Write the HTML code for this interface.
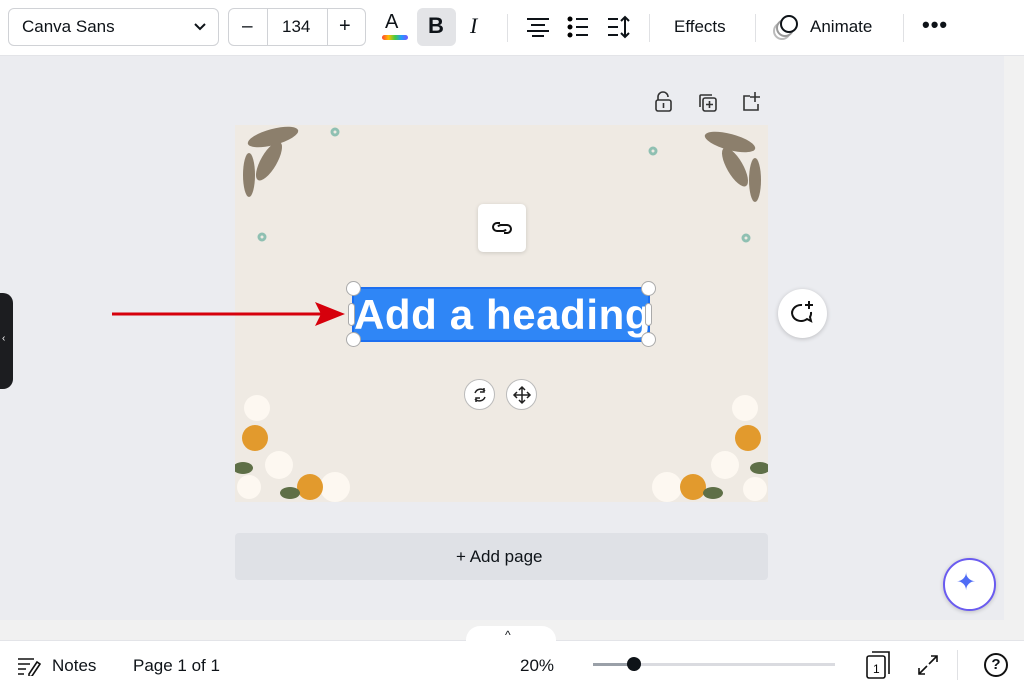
<!DOCTYPE html>
<html><head><style>
*{margin:0;padding:0;box-sizing:border-box}
body{width:1024px;height:682px;overflow:hidden;background:#ebecf0;font-family:"Liberation Sans",sans-serif;position:relative;color:#0e1318}
.a{position:absolute}
.tb{left:0;top:0;width:1024px;height:56px;background:#fff;border-bottom:1px solid #e3e4e8}
.btn{border:1px solid #d0d2d6;border-radius:6px;background:#fff}
.t{font-size:17px;color:#0e1318}
.sep{width:1px;height:28px;background:#e0e1e4;top:14px}
</style></head><body>
<div class="a tb"></div>
<div class="a btn" style="left:8px;top:8px;width:211px;height:38px"></div>
<div class="a t" style="left:22px;top:17px">Canva Sans</div>
<svg class="a" style="left:192px;top:20px" width="16" height="14"><path d="M3 4l5 5 5-5" stroke="#0e1318" stroke-width="2" fill="none"/></svg>
<div class="a btn" style="left:228px;top:8px;width:138px;height:38px"></div>
<div class="a" style="left:267px;top:9px;width:1px;height:36px;background:#d0d2d6"></div>
<div class="a" style="left:327px;top:9px;width:1px;height:36px;background:#d0d2d6"></div>
<div class="a t" style="left:242px;top:16px;font-size:19px">–</div>
<div class="a t" style="left:282px;top:17px">134</div>
<div class="a t" style="left:339px;top:15px;font-size:20px">+</div>
<div class="a" style="left:385px;top:11px;font-size:20px">A</div>
<div class="a" style="left:382px;top:35px;width:26px;height:5px;border-radius:3px;background:linear-gradient(90deg,#f43,#fb0,#4c4,#29f,#75f)"></div>
<div class="a" style="left:417px;top:8px;width:39px;height:38px;background:#e3e4e7;border-radius:6px"></div>
<div class="a" style="left:428px;top:13px;font-size:22px;font-weight:bold">B</div>
<div class="a" style="left:470px;top:13px;font-size:22px;font-style:italic;font-family:'Liberation Serif',serif">I</div>
<div class="a sep" style="left:507px"></div>
<svg class="a" style="left:525px;top:16px" width="26" height="22"><path d="M2 3h22M6 9h14M2 15h22M7 20h12" stroke="#0e1318" stroke-width="2"/></svg>
<svg class="a" style="left:566px;top:15px" width="26" height="24"><circle cx="4" cy="4" r="2.5"/><circle cx="4" cy="12" r="2.5"/><circle cx="4" cy="20" r="2.5"/><path d="M10 4h12M10 12h12M10 20h12" stroke="#0e1318" stroke-width="2"/></svg>
<svg class="a" style="left:607px;top:14px" width="26" height="26"><path d="M1 5h10M1 13h10M1 21h10M18 3v20M14 7l4-4 4 4M14 19l4 4 4-4" stroke="#0e1318" stroke-width="2" fill="none"/></svg>
<div class="a sep" style="left:649px"></div>
<div class="a t" style="left:674px;top:17px">Effects</div>
<div class="a sep" style="left:755px"></div>
<svg class="a" style="left:772px;top:13px" width="30" height="28"><circle cx="10" cy="18" r="8" fill="none" stroke="#bbb" stroke-width="2"/><circle cx="13" cy="15" r="8" fill="#fff" stroke="#999" stroke-width="2"/><circle cx="17" cy="11" r="8" fill="#fff" stroke="#0e1318" stroke-width="2"/></svg>
<div class="a t" style="left:810px;top:17px">Animate</div>
<div class="a sep" style="left:903px"></div>
<div class="a" style="left:922px;top:12px;font-size:22px;font-weight:bold;letter-spacing:1px">•••</div>
<div class="a" style="left:1004px;top:56px;width:20px;height:584px;background:#f1f1f1"></div>
<div class="a" style="left:0;top:620px;width:1004px;height:20px;background:#f1f1f1"></div>
<div class="a" style="left:0;top:640px;width:1024px;height:42px;background:#fff;border-top:1px solid #e3e4e8"></div>
<div class="a" style="left:466px;top:626px;width:90px;height:20px;background:#fff;border-radius:14px 14px 0 0"></div>
<div class="a" style="left:505px;top:628px;font-size:12px">^</div>
<div class="a" style="left:0;top:293px;width:13px;height:96px;background:#1c1d20;border-radius:0 10px 10px 0"></div>
<div class="a" style="left:2px;top:333px;color:#fff;font-size:10px">‹</div>
<svg class="a" style="left:654px;top:91px" width="20" height="22"><path d="M4 9V6a5 5 0 0 1 10 0" stroke="#333" stroke-width="1.6" fill="none"/><rect x="2" y="9" width="15" height="11" rx="2" stroke="#333" stroke-width="1.6" fill="none"/><path d="M9.5 12v5" stroke="#333" stroke-width="1.6"/></svg>
<svg class="a" style="left:697px;top:92px" width="22" height="22"><rect x="6" y="6" width="13" height="13" rx="2" stroke="#333" stroke-width="1.6" fill="none"/><path d="M3 15V4a1 1 0 0 1 1-1h11M12.5 9v7M9 12.5h7" stroke="#333" stroke-width="1.6" fill="none"/></svg>
<svg class="a" style="left:740px;top:91px" width="22" height="22"><path d="M10 5H4v14h14v-6M15 1v10M10 6h10" stroke="#333" stroke-width="1.6" fill="none"/></svg>
<div class="a" style="left:235px;top:125px;width:533px;height:377px;background:#efeae3;overflow:hidden">
<svg width="533" height="377">
<g fill="#8c7f6c"><ellipse cx="38" cy="12" rx="26" ry="8" transform="rotate(-15 38 12)"/><ellipse cx="34" cy="36" rx="8" ry="22" transform="rotate(30 34 36)"/><ellipse cx="14" cy="50" rx="6" ry="22"/></g>
<g fill="#8c7f6c"><ellipse cx="495" cy="17" rx="26" ry="8" transform="rotate(15 495 17)"/><ellipse cx="500" cy="42" rx="8" ry="22" transform="rotate(-30 500 42)"/><ellipse cx="520" cy="55" rx="6" ry="22"/></g>
<g fill="none" stroke="#8fc0b2" stroke-width="3"><circle cx="100" cy="7" r="3"/><circle cx="27" cy="112" r="3"/><circle cx="418" cy="26" r="3"/><circle cx="511" cy="113" r="3"/></g>
<g fill="#fdf8f1"><circle cx="22" cy="283" r="13"/><circle cx="44" cy="340" r="14"/><circle cx="100" cy="362" r="15"/><circle cx="14" cy="362" r="12"/><circle cx="510" cy="283" r="13"/><circle cx="490" cy="340" r="14"/><circle cx="432" cy="362" r="15"/><circle cx="520" cy="364" r="12"/></g>
<g fill="#e29a2d"><circle cx="20" cy="313" r="13"/><circle cx="75" cy="362" r="13"/><circle cx="513" cy="313" r="13"/><circle cx="458" cy="362" r="13"/></g>
<g fill="#5e6f47"><ellipse cx="8" cy="343" rx="10" ry="6"/><ellipse cx="55" cy="368" rx="10" ry="6"/><ellipse cx="525" cy="343" rx="10" ry="6"/><ellipse cx="478" cy="368" rx="10" ry="6"/></g>
</svg>
</div>
<div class="a" style="left:478px;top:204px;width:48px;height:48px;background:#fff;border-radius:5px;box-shadow:0 1px 4px rgba(0,0,0,.15)"></div>
<svg class="a" style="left:489px;top:215px" width="26" height="26"><path d="M11 8H8a4 4 0 0 0 0 8h6a4 4 0 0 0 3-1.5M15 18h3a4 4 0 0 0 0-8h-6a4 4 0 0 0-3 1.5" stroke="#111" stroke-width="2" fill="none"/></svg>
<div class="a" style="left:352px;top:287px;width:298px;height:55px;background:#2f86f6;border:2px solid #1c6ff0"></div>
<div class="a" style="left:354px;top:290px;color:#fff;font-size:42px;font-weight:bold;line-height:50px;letter-spacing:0.6px;white-space:nowrap">Add a heading</div>
<div class="a" style="left:346px;top:281px;width:15px;height:15px;border-radius:50%;background:#fff;border:1px solid #aaa"></div>
<div class="a" style="left:641px;top:281px;width:15px;height:15px;border-radius:50%;background:#fff;border:1px solid #aaa"></div>
<div class="a" style="left:346px;top:332px;width:15px;height:15px;border-radius:50%;background:#fff;border:1px solid #aaa"></div>
<div class="a" style="left:641px;top:332px;width:15px;height:15px;border-radius:50%;background:#fff;border:1px solid #aaa"></div>
<div class="a" style="left:348px;top:303px;width:7px;height:23px;border-radius:4px;background:#fff;border:1px solid #aaa"></div>
<div class="a" style="left:645px;top:303px;width:7px;height:23px;border-radius:4px;background:#fff;border:1px solid #aaa"></div>
<svg class="a" style="left:110px;top:298px" width="240" height="34"><path d="M2 16h210" stroke="#d6000c" stroke-width="3"/><path d="M205 4l30 12-30 12 6-12z" fill="#d6000c"/></svg>
<div class="a" style="left:464px;top:379px;width:31px;height:31px;border-radius:50%;background:#fff;border:1px solid #bbb"></div>
<svg class="a" style="left:470px;top:385px" width="20" height="20"><path d="M5 8a6 6 0 0 1 10-2M15 12a6 6 0 0 1-10 2M14 3v4h-4M6 17v-4h4" stroke="#222" stroke-width="1.5" fill="none"/></svg>
<div class="a" style="left:506px;top:379px;width:31px;height:31px;border-radius:50%;background:#fff;border:1px solid #bbb"></div>
<svg class="a" style="left:512px;top:385px" width="20" height="20"><path d="M10 2v16M2 10h16M7 5l3-3 3 3M7 15l3 3 3-3M5 7l-3 3 3 3M15 7l3 3-3 3" stroke="#222" stroke-width="1.5" fill="none"/></svg>
<div class="a" style="left:778px;top:289px;width:49px;height:49px;border-radius:50%;background:#fff;box-shadow:0 1px 5px rgba(0,0,0,.2)"></div>
<svg class="a" style="left:789px;top:299px" width="28" height="28"><path d="M13 6a9 8 0 1 0 5 14l4 2-1-4a8 8 0 0 0 1-5" stroke="#111" stroke-width="2" fill="none"/><path d="M20 2v8M16 6h8" stroke="#111" stroke-width="2"/></svg>
<div class="a" style="left:235px;top:533px;width:533px;height:47px;background:#dfe1e6;border-radius:4px"></div>
<div class="a t" style="left:456px;top:547px">+ Add page</div>
<div class="a" style="left:943px;top:558px;width:53px;height:53px;border-radius:50%;background:#fff;border:2px solid #6a5bf0;box-shadow:0 1px 4px rgba(0,0,0,.2)"></div>
<div class="a" style="left:956px;top:568px;font-size:24px;color:#4f6cf5">✦</div>
<svg class="a" style="left:17px;top:656px" width="24" height="20"><path d="M1 3h16M1 8h12M1 13h8M1 18h6M12 18l8-12 3 2-8 12-3 1z" stroke="#111" stroke-width="1.6" fill="none"/></svg>
<div class="a t" style="left:52px;top:656px">Notes</div>
<div class="a t" style="left:133px;top:656px">Page 1 of 1</div>
<div class="a t" style="left:520px;top:656px">20%</div>
<div class="a" style="left:593px;top:663px;width:242px;height:3px;background:#dadbe0"></div>
<div class="a" style="left:593px;top:663px;width:40px;height:3px;background:#9aa0a8"></div>
<div class="a" style="left:627px;top:657px;width:14px;height:14px;border-radius:50%;background:#0e1318"></div>
<svg class="a" style="left:865px;top:650px" width="28" height="30"><path d="M7 2h17v22" stroke="#111" stroke-width="1.6" fill="none"/><rect x="2" y="6" width="18" height="22" rx="2" stroke="#111" stroke-width="1.6" fill="#fff"/><text x="8" y="23" font-size="12" font-family="Liberation Sans">1</text></svg>
<svg class="a" style="left:917px;top:654px" width="22" height="22"><path d="M12 10l8-8M14 2h6v6M10 12l-8 8M2 14v6h6" stroke="#111" stroke-width="1.6" fill="none"/></svg>
<div class="a" style="left:957px;top:650px;width:1px;height:30px;background:#e0e1e4"></div>
<div class="a" style="left:984px;top:653px;width:24px;height:24px;border:2px solid #111;border-radius:50%;text-align:center;font-size:15px;line-height:20px;font-weight:bold">?</div>
</body></html>
